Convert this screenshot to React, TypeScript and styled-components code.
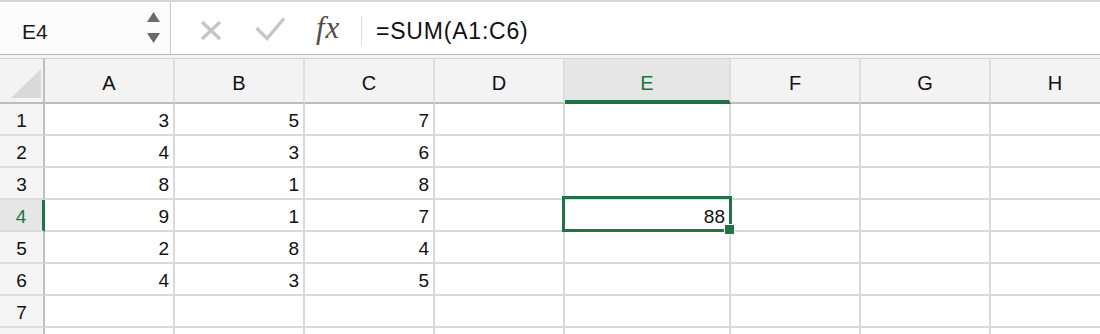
import React from 'react';
import styled, { createGlobalStyle } from 'styled-components';

const GREEN = '#217346';

const GlobalStyle = createGlobalStyle`
  html, body {
    margin: 0;
    padding: 0;
    background: #ffffff;
  }
  body {
    font-family: "Liberation Sans", Arial, sans-serif;
    color: #111111;
    overflow: hidden;
  }
`;

const Sheet = styled.div`
  width: 1100px;
  height: 334px;
  overflow: hidden;
  background: #ffffff;
`;

/* formula bar */
const FormulaBar = styled.div`
  display: flex;
  align-items: center;
  height: 55px;
  box-sizing: border-box;
  border-top: 2px solid #d6d6d6;
  border-bottom: 1px solid #b9b9b9;
  background: #ffffff;
`;

const NameBox = styled.div`
  width: 171px;
  height: 100%;
  box-sizing: border-box;
  border-right: 1px solid #c9c9c9;
  display: flex;
  align-items: center;
  justify-content: space-between;
  padding: 0 10px 0 22px;
  background: #fcfcfc;
`;

const NameText = styled.span`
  font-size: 21px;
  padding-top: 8px;
  color: #1a1a1a;
`;

const IconSlot = styled.div<{ $left: number; $top?: number }>`
  display: flex;
  margin-left: ${(p) => p.$left}px;
  margin-top: ${(p) => p.$top ?? 0}px;
`;

const Fx = styled.span`
  width: 30px;
  font-family: "Liberation Serif", "Times New Roman", serif;
  font-style: italic;
  font-size: 31px;
  color: #4d4d4d;
  margin-left: 31px;
  letter-spacing: 1px;
  white-space: nowrap;
`;

const Divider = styled.div`
  width: 1px;
  height: 30px;
  background: #dedede;
  margin-left: 15px;
  margin-top: 5px;
`;

const FormulaInput = styled.div`
  flex: 1;
  align-self: stretch;
  display: flex;
  align-items: center;
  margin-left: 14px;
  padding-top: 6px;
  font-size: 23px;
  letter-spacing: 0.8px;
  color: #111111;
`;

const Spacer = styled.div`
  height: 3px;
  background: #f4f4f4;
`;

/* grid */
const Grid = styled.div`
  display: grid;
  grid-template-columns: 45px repeat(4, 130px) 166px repeat(3, 130px);
  grid-template-rows: 46px;
  grid-auto-rows: 32px;
`;

const Corner = styled.div`
  box-sizing: border-box;
  background: #f3f3f3;
  border-top: 1px solid #d2d2d2;
  border-right: 2px solid #bfbfbf;
  border-bottom: 2px solid #bdbdbd;
  display: flex;
  align-items: flex-end;
  justify-content: flex-end;
  padding: 0 2px 4px 0;
`;

const ColHeader = styled.div<{ $active?: boolean }>`
  box-sizing: border-box;
  background: ${(p) => (p.$active ? '#e6e6e6' : '#f3f3f3')};
  border-top: 1px solid #d2d2d2;
  border-right: 2px solid #dedede;
  border-bottom: ${(p) => (p.$active ? `4px solid ${GREEN}` : '2px solid #bdbdbd')};
  display: flex;
  align-items: center;
  justify-content: center;
  padding-top: ${(p) => (p.$active ? 8 : 6)}px;
  font-size: 20px;
  color: ${(p) => (p.$active ? GREEN : '#111111')};
`;

const RowHeader = styled.div<{ $active?: boolean }>`
  box-sizing: border-box;
  background: ${(p) => (p.$active ? '#e6e6e6' : '#f5f5f5')};
  border-right: ${(p) => (p.$active ? `3px solid ${GREEN}` : '2px solid #bfbfbf')};
  border-bottom: 2px solid #dcdcdc;
  display: flex;
  align-items: center;
  justify-content: center;
  padding-top: 4px;
  font-size: 19px;
  color: ${(p) => (p.$active ? GREEN : '#111111')};
`;

const Cell = styled.div<{ $selected?: boolean }>`
  position: relative;
  z-index: ${(p) => (p.$selected ? 2 : 0)};
  box-sizing: border-box;
  border-right: 2px solid #d9d9d9;
  border-bottom: 2px solid #d9d9d9;
  display: flex;
  align-items: center;
  justify-content: flex-end;
  padding: 4px 4px 0 0;
  font-size: 19px;
  color: #111111;

  ${(p) =>
    p.$selected &&
    `
    &::after {
      content: '';
      position: absolute;
      top: -4px;
      left: -3px;
      right: -3px;
      bottom: -2px;
      border: 3px solid ${GREEN};
      pointer-events: none;
    }
  `}
`;

const FillHandle = styled.span`
  position: absolute;
  right: -6px;
  bottom: -5px;
  width: 9px;
  height: 9px;
  background: ${GREEN};
  border: 1px solid #ffffff;
  z-index: 3;
`;

const COLUMNS = ['A', 'B', 'C', 'D', 'E', 'F', 'G', 'H'];
const DATA: Record<string, (number | null)[]> = {
  A: [3, 4, 8, 9, 2, 4],
  B: [5, 3, 1, 1, 8, 3],
  C: [7, 6, 8, 7, 4, 5],
};
const ACTIVE_COL = 'E';
const ACTIVE_ROW = 4;
const ROW_COUNT = 7;

const Spinner = () => (
  <svg width="13" height="32" viewBox="0 0 13 32">
    <polygon points="6.5,0 13,10 0,10" fill="#6b6b6b" />
    <polygon points="0,21 13,21 6.5,31" fill="#6b6b6b" />
  </svg>
);

const CancelIcon = () => (
  <svg width="22" height="19" viewBox="0 0 22 19">
    <path d="M2 1 L20 18 M20 1 L2 18" stroke="#c6c6c6" strokeWidth="3.4" fill="none" />
  </svg>
);

const CheckIcon = () => (
  <svg width="30" height="24" viewBox="0 0 30 24">
    <polyline points="1.5,11 12,21.5 29,1.5" stroke="#c6c6c6" strokeWidth="3.4" fill="none" />
  </svg>
);

const CornerTriangle = () => (
  <svg width="30" height="29" viewBox="0 0 30 29">
    <polygon points="30,0 30,29 0,29" fill="#d9d9d9" />
  </svg>
);

const App: React.FC = () => {
  // one extra row peeks in at the bottom edge, without its number
  const rows = Array.from({ length: ROW_COUNT + 1 }, (_, i) => i + 1);

  return (
    <Sheet>
      <GlobalStyle />
      <FormulaBar>
        <NameBox>
          <NameText>E4</NameText>
          <Spinner />
        </NameBox>
        <IconSlot $left={29} $top={4}>
          <CancelIcon />
        </IconSlot>
        <IconSlot $left={33} $top={2}>
          <CheckIcon />
        </IconSlot>
        <Fx>fx</Fx>
        <Divider />
        <FormulaInput>=SUM(A1:C6)</FormulaInput>
      </FormulaBar>
      <Spacer />
      <Grid>
        <Corner>
          <CornerTriangle />
        </Corner>
        {COLUMNS.map((c) => (
          <ColHeader key={c} $active={c === ACTIVE_COL}>
            {c}
          </ColHeader>
        ))}
        {rows.map((r) => (
          <React.Fragment key={r}>
            <RowHeader $active={r === ACTIVE_ROW}>{r <= ROW_COUNT ? r : ''}</RowHeader>
            {COLUMNS.map((c) => {
              const selected = c === ACTIVE_COL && r === ACTIVE_ROW;
              const value = selected ? 88 : DATA[c]?.[r - 1] ?? null;
              return (
                <Cell key={c} $selected={selected}>
                  {value}
                  {selected && <FillHandle />}
                </Cell>
              );
            })}
          </React.Fragment>
        ))}
      </Grid>
    </Sheet>
  );
};

export default App;
